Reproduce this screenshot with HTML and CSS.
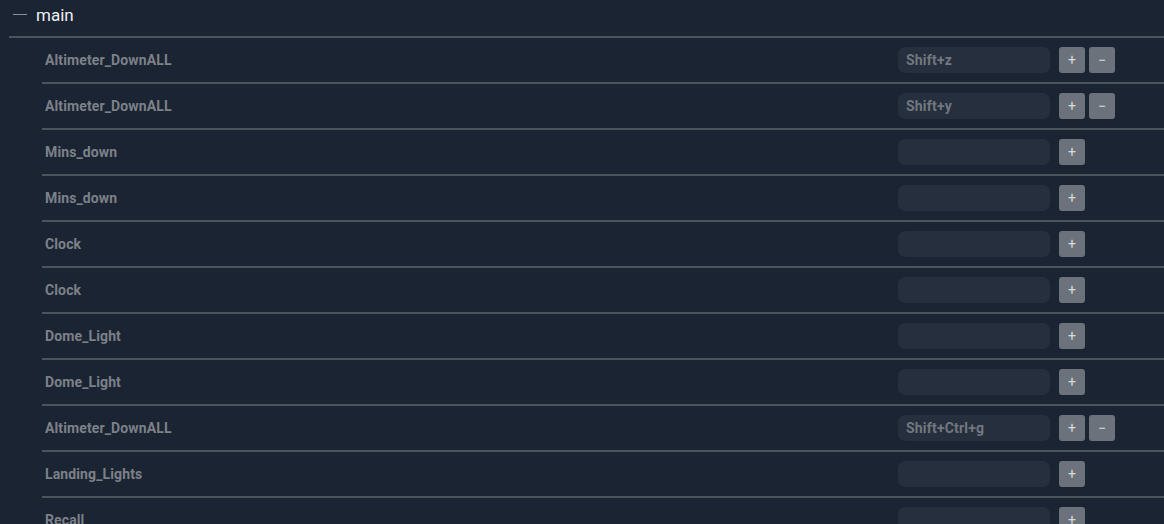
FILE: index.html
```html
<!DOCTYPE html>
<html>
<head>
<meta charset="utf-8">
<link rel="stylesheet" href="styles.css">
</head>
<body>
<div class="group">
  <div class="group-head">
    <span class="dash"></span>
    <span class="group-title">main</span>
  </div>
  <div class="rows">
    <div class="row">
      <span class="label">Altimeter_DownALL</span>
      <div class="controls">
        <div class="key">Shift+z</div>
        <button class="btn">+</button>
        <button class="btn">−</button>
      </div>
    </div>
    <div class="row">
      <span class="label">Altimeter_DownALL</span>
      <div class="controls">
        <div class="key">Shift+y</div>
        <button class="btn">+</button>
        <button class="btn">−</button>
      </div>
    </div>
    <div class="row">
      <span class="label">Mins_down</span>
      <div class="controls">
        <div class="key"></div>
        <button class="btn">+</button>
        <span class="spacer"></span>
      </div>
    </div>
    <div class="row">
      <span class="label">Mins_down</span>
      <div class="controls">
        <div class="key"></div>
        <button class="btn">+</button>
        <span class="spacer"></span>
      </div>
    </div>
    <div class="row">
      <span class="label">Clock</span>
      <div class="controls">
        <div class="key"></div>
        <button class="btn">+</button>
        <span class="spacer"></span>
      </div>
    </div>
    <div class="row">
      <span class="label">Clock</span>
      <div class="controls">
        <div class="key"></div>
        <button class="btn">+</button>
        <span class="spacer"></span>
      </div>
    </div>
    <div class="row">
      <span class="label">Dome_Light</span>
      <div class="controls">
        <div class="key"></div>
        <button class="btn">+</button>
        <span class="spacer"></span>
      </div>
    </div>
    <div class="row">
      <span class="label">Dome_Light</span>
      <div class="controls">
        <div class="key"></div>
        <button class="btn">+</button>
        <span class="spacer"></span>
      </div>
    </div>
    <div class="row">
      <span class="label">Altimeter_DownALL</span>
      <div class="controls">
        <div class="key">Shift+Ctrl+g</div>
        <button class="btn">+</button>
        <button class="btn">−</button>
      </div>
    </div>
    <div class="row">
      <span class="label">Landing_Lights</span>
      <div class="controls">
        <div class="key"></div>
        <button class="btn">+</button>
        <span class="spacer"></span>
      </div>
    </div>
    <div class="row">
      <span class="label">Recall</span>
      <div class="controls">
        <div class="key"></div>
        <button class="btn">+</button>
        <span class="spacer"></span>
      </div>
    </div>
  </div>
</div>
</body>
</html>
```
FILE: styles.css
```css
html, body {
  margin: 0;
  padding: 0;
  background: #1b2433;
  font-family: Roboto, "Liberation Sans", sans-serif;
  overflow: hidden;
}

.group {
  padding-left: 9px;
}

.group-head {
  height: 36px;
  display: flex;
  align-items: center;
  border-bottom: 2px solid #4b535d;
  padding-left: 4px;
  box-sizing: content-box;
}

.dash {
  width: 14px;
  height: 1px;
  background: #8a9099;
  margin-right: 9px;
  margin-top: -7px;
}

.group-title {
  color: #eef0f2;
  font-size: 17px;
  margin-top: -7px;
}

.rows {
  padding-left: 33px;
}

.row {
  height: 44px;
  display: flex;
  align-items: center;
  justify-content: space-between;
  border-bottom: 2px solid #4b535d;
  padding-left: 3px;
  padding-right: 49px;
}

.label {
  color: #7c8188;
  font-weight: bold;
  font-size: 14px;
  letter-spacing: 0.12px;
}

.controls {
  display: flex;
  align-items: center;
  gap: 4px;
}

.key {
  width: 144px;
  height: 26px;
  line-height: 26px;
  padding-left: 8px;
  margin-right: 5px;
  background: #262f3d;
  border-radius: 7px;
  color: #72777f;
  font-weight: bold;
  font-size: 14px;
  letter-spacing: 0.2px;
}

.btn {
  width: 26px;
  height: 26px;
  padding: 0;
  border: none;
  border-radius: 3px;
  background: #6c727b;
  color: #d8dadd;
  font-family: Roboto, "Liberation Sans", sans-serif;
  font-size: 14px;
  line-height: 26px;
  text-align: center;
}

.spacer {
  width: 26px;
  height: 26px;
}
```
